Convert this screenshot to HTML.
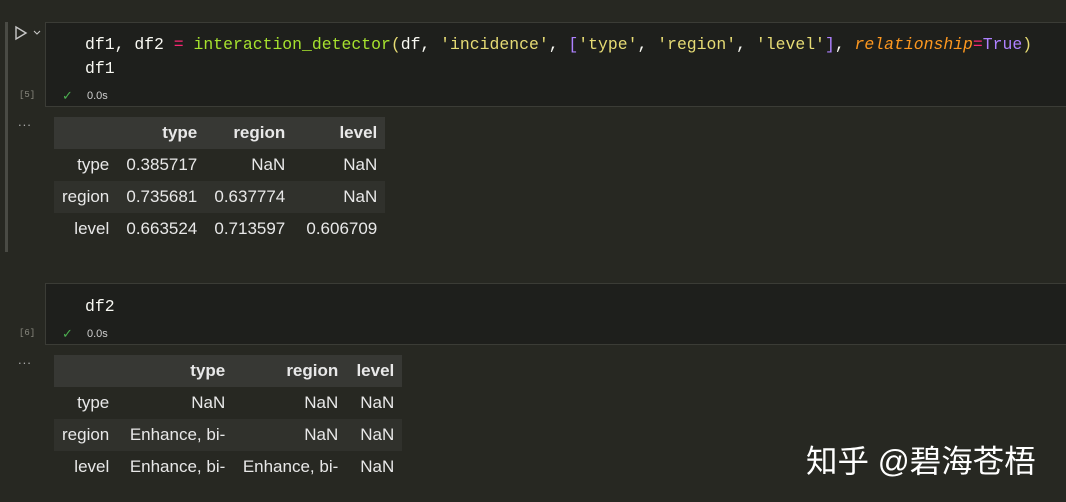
<!DOCTYPE html>
<html><head><meta charset="utf-8"><style>
*{margin:0;padding:0;box-sizing:border-box}
body{width:1066px;height:502px;background:#272822;overflow:hidden;position:relative;font-family:"Liberation Sans",sans-serif;color:#e0e0e0}
.abs{position:absolute}
.cell{position:absolute;left:45px;right:-2px;background:#1e1f1c;border:1px solid #3b3c36}
.code{position:absolute;left:85px;font-family:"Liberation Mono",monospace;font-size:16.45px;color:#f8f8f2;white-space:pre;line-height:24px}
.cnt{position:absolute;left:19px;font-family:"Liberation Mono",monospace;font-size:9px;color:#8a8a80}
.ok{position:absolute;left:62px;color:#4caf50;font-size:13px}
.tm{position:absolute;left:87px;font-size:11px;color:#cfcfcf}
.dots{position:absolute;left:18px;font-size:13px;color:#aaa;letter-spacing:1px}
table{position:absolute;left:54px;border-collapse:collapse;font-size:17px;color:#e8e8e8}
td,th{height:32px;text-align:right;padding:0 8px 0 8px;white-space:nowrap}
th{font-weight:bold;background:#373834}
tr.alt td{background:#30312c}
</style></head><body>
<div class="abs" style="left:5px;top:22px;width:3px;height:230px;background:#4a4b45"></div>
<svg class="abs" style="left:14px;top:25px" width="32" height="16"><path d="M2 2 L12 8 L2 14 Z" fill="none" stroke="#c8c8c8" stroke-width="1.4"/><path d="M20 6 L23 9 L26 6" fill="none" stroke="#c8c8c8" stroke-width="1.1"/></svg>
<div class="cell" style="top:22px;height:85px"></div>
<div class="code" style="top:33px">df1, df2 <span style="color:#f92672">=</span> <span style="color:#a6e22e">interaction_detector</span><span style="color:#e6db74">(</span>df, <span style="color:#e6db74">'incidence'</span>, <span style="color:#ae81ff">[</span><span style="color:#e6db74">'type'</span>, <span style="color:#e6db74">'region'</span>, <span style="color:#e6db74">'level'</span><span style="color:#ae81ff">]</span>, <i style="color:#fd971f">relationship</i><span style="color:#f92672">=</span><span style="color:#ae81ff">True</span><span style="color:#e6db74">)</span>
df1</div>
<div class="cnt" style="top:90px">[5]</div>
<div class="ok" style="top:88px">✓</div>
<div class="tm" style="top:90px">0.0s</div>
<div class="dots" style="top:114px">...</div>
<table style="top:117px">
<tr><th style="width:59px"></th><th style="width:88px">type</th><th style="width:88px">region</th><th style="width:92px">level</th></tr>
<tr><td>type</td><td>0.385717</td><td>NaN</td><td>NaN</td></tr>
<tr class="alt"><td>region</td><td>0.735681</td><td>0.637774</td><td>NaN</td></tr>
<tr><td>level</td><td>0.663524</td><td>0.713597</td><td>0.606709</td></tr>
</table>
<div class="cell" style="top:283px;height:62px"></div>
<div class="code" style="top:295px">df2</div>
<div class="cnt" style="top:328px">[6]</div>
<div class="ok" style="top:326px">✓</div>
<div class="tm" style="top:328px">0.0s</div>
<div class="dots" style="top:352px">...</div>
<table style="top:355px">
<tr><th style="width:59px"></th><th style="width:116px">type</th><th style="width:113px">region</th><th style="width:56px">level</th></tr>
<tr><td>type</td><td>NaN</td><td>NaN</td><td>NaN</td></tr>
<tr class="alt"><td>region</td><td>Enhance, bi-</td><td>NaN</td><td>NaN</td></tr>
<tr><td>level</td><td>Enhance, bi-</td><td>Enhance, bi-</td><td>NaN</td></tr>
</table>
<div class="abs" style="left:806px;top:436px;font-size:31.5px;color:#fff;font-family:'Liberation Sans','Noto Sans CJK SC',sans-serif;white-space:nowrap">知乎 @碧海苍梧</div>
</body></html>
